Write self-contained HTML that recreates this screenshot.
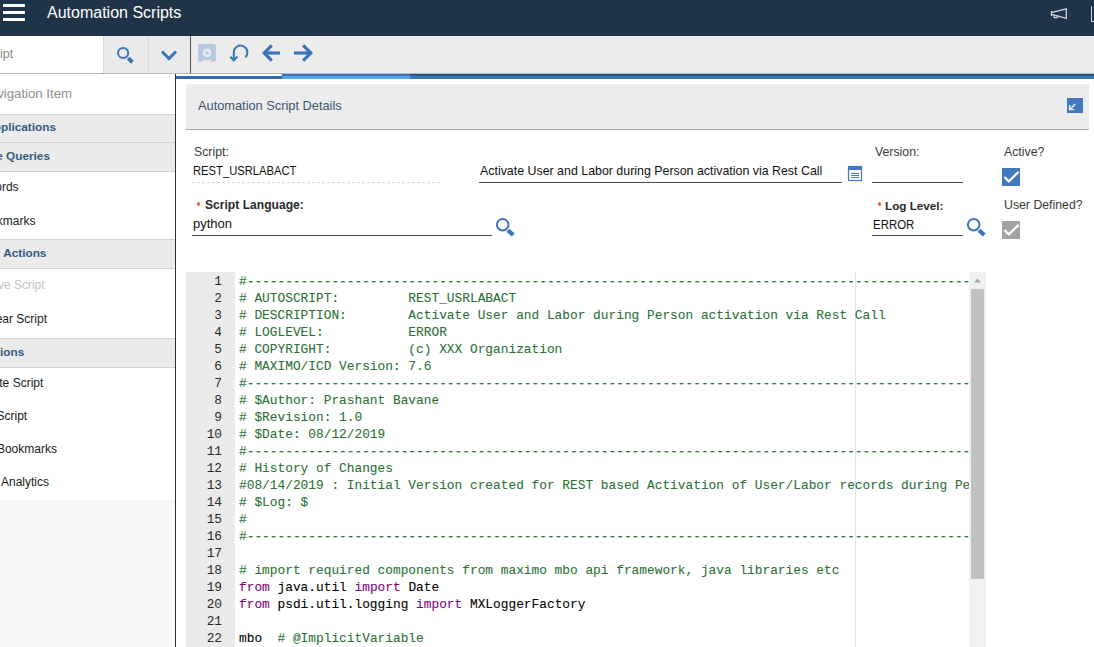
<!DOCTYPE html>
<html><head><meta charset="utf-8">
<style>
*{box-sizing:border-box;margin:0;padding:0}
html,body{width:1094px;height:647px;overflow:hidden;background:#fff;font-family:"Liberation Sans",sans-serif;position:relative}
.a{position:absolute}
.r{width:300px;text-align:right;white-space:nowrap}
#hdr{left:0;top:0;width:1094px;height:36px;background:#1f3448}
.ham{left:3px;width:22px;height:3px;background:#fff}
#title{left:47px;top:4px;font-size:16px;line-height:18px;color:#fff;white-space:nowrap}
#tb{left:0;top:36px;width:1094px;height:38px;background:#ececec;border-bottom:1px solid #b8b8b8}
.lp-band{left:0;width:175px;background:#ebebeb;border-top:1px solid #d2d2d2;border-bottom:1px solid #d2d2d2}
.lp-st{font-weight:bold;color:#345a82;font-size:11.8px;line-height:14px}
.lp-it{font-size:12px;line-height:14px;color:#1a1a1a}
.lp-ph{font-size:13.2px;line-height:15px;color:#8f8f8f}
.lbl{font-size:12.3px;line-height:14px;color:#3a3a3a;white-space:nowrap}
.val{font-size:12px;line-height:14px;color:#111;white-space:nowrap}
.req{font-size:12.1px;line-height:14px;color:#2a2a2a;font-weight:bold;white-space:nowrap}
.dot{width:3.8px;height:3.8px;border-radius:50%;background:#ee6a2a}
.code{font-family:"Liberation Mono",monospace;font-size:12.83px;line-height:17px;white-space:pre;color:#000;-webkit-text-stroke:0.08px currentColor}
.c{color:#2a7034}
.k{color:#80007c}
.ln{font-family:"Liberation Mono",monospace;font-size:12.8px;line-height:17px;color:#2a2a2a;text-align:right;width:36px}
.ul{height:1px;background:#4a4a4a}
</style></head><body>
<!-- header -->
<div id="hdr" class="a">
  <div class="a ham" style="top:4px"></div>
  <div class="a ham" style="top:11px"></div>
  <div class="a ham" style="top:18px"></div>
  <div id="title" class="a">Automation Scripts</div>
  <svg class="a" style="left:1049px;top:6px" width="20" height="16" viewBox="0 0 20 16">
    <path d="M2.5 5 V10" stroke="#d0d4da" stroke-width="1.4"/>
    <path d="M3 6.4 L17.3 2.8 V12.3 L3 8.4" fill="none" stroke="#d0d4da" stroke-width="1.3"/>
    <path d="M5.2 9 V11.6 H8.3 V10" fill="none" stroke="#d0d4da" stroke-width="1.2"/>
  </svg>
  <div class="a" style="left:1091px;top:6px;width:8px;height:16px;border-left:1px solid #d0d4da;border-bottom:1px solid #d0d4da"></div>
</div>

<!-- toolbar -->
<div id="tb" class="a">
  <div class="a" style="left:0;top:0;width:103px;height:37px;background:#fff"></div>
  <div class="a" style="left:0;top:11px;font-size:12.5px;color:#8a8a8a;line-height:14px">ipt</div>
  <div class="a" style="left:103px;top:0;width:46px;height:37px;background:#eaeaea;border-left:1px solid #d8d8d8;border-right:1px solid #d8d8d8"></div>
  <div class="a" style="left:149px;top:0;width:42px;height:37px;background:#eaeaea;border-right:1px solid #505050"></div>
  <svg class="a" style="left:115px;top:10px" width="20" height="20" viewBox="0 0 20 20">
    <circle cx="8.1" cy="7" r="5.1" fill="none" stroke="#3c74bb" stroke-width="2"/>
    <path d="M13.2 12.2 L17.4 16.4" stroke="#3c74bb" stroke-width="4"/>
  </svg>
  <svg class="a" style="left:159px;top:11.5px" width="20" height="16" viewBox="0 0 20 16">
    <path d="M3 3.5 L10 10.5 L17 3.5" fill="none" stroke="#3c74bb" stroke-width="3.1"/>
  </svg>
  <svg class="a" style="left:197px;top:7px" width="20" height="20" viewBox="0 0 20 20">
    <path d="M1.1 0.9 H17.2 L18.9 2.6 V17.3 L17.4 18.8 H14.2 V17.1 H5.8 V18.8 H1.1 Z" fill="#b7c9e0"/>
    <circle cx="10" cy="9.9" r="3" fill="none" stroke="#e6ecf3" stroke-width="2.6"/>
  </svg>
  <svg class="a" style="left:228px;top:7px" width="22" height="20" viewBox="0 0 22 20">
    <path d="M17.3 14.3 A6.8 6.8 0 1 0 5.8 9.5 V17" fill="none" stroke="#3c74bb" stroke-width="2"/>
    <path d="M2.3 13.8 L5.8 17.5 L9.3 13.8" fill="none" stroke="#3c74bb" stroke-width="2"/>
  </svg>
  <svg class="a" style="left:261px;top:7px" width="21" height="20" viewBox="0 0 21 20">
    <path d="M19 10 H4" stroke="#3c74bb" stroke-width="3.2"/>
    <path d="M10.8 2.3 L3.2 10 L10.8 17.7" fill="none" stroke="#3c74bb" stroke-width="3.2"/>
  </svg>
  <svg class="a" style="left:293px;top:7px" width="21" height="20" viewBox="0 0 21 20">
    <path d="M1 10 H16" stroke="#3c74bb" stroke-width="3.2"/>
    <path d="M10.2 2.3 L17.8 10 L10.2 17.7" fill="none" stroke="#3c74bb" stroke-width="3.2"/>
  </svg>
</div>

<!-- left panel -->
<div class="a" style="left:0;top:74px;width:175px;height:573px;background:#fff"></div>
<div class="a" style="left:0;top:500px;width:175px;height:147px;background:#f7f7f7"></div>
<div class="a" style="left:175px;top:74px;width:1px;height:573px;background:#1f3448"></div>
<div class="a lp-band" style="top:114px;height:29px"></div>
<div class="a lp-band" style="top:142px;height:30px"></div>
<div class="a lp-band" style="top:239px;height:30px"></div>
<div class="a lp-band" style="top:338px;height:30px"></div>
<div class="a lp-ph r" style="left:-228px;top:86px;">vigation Item</div><div class="a lp-st r" style="left:-244px;top:120px;">Go To Applications</div><div class="a lp-st r" style="left:-250px;top:149px;">Available Queries</div><div class="a lp-it r" style="left:-281.4px;top:180px;">All Records</div><div class="a lp-it r" style="left:-264.6px;top:213.5px;">All Bookmarks</div><div class="a lp-st r" style="left:-253.6px;top:246px;">Common Actions</div><div class="a lp-it r" style="left:-255.4px;top:278px;color:#c4c4c4">Save Script</div><div class="a lp-it r" style="left:-253px;top:312px;">Clear Script</div><div class="a lp-st r" style="left:-275.7px;top:345px;">More Actions</div><div class="a lp-it r" style="left:-256.7px;top:376px;">Duplicate Script</div><div class="a lp-it r" style="left:-272.8px;top:409px;">Create Script</div><div class="a lp-it r" style="left:-243.1px;top:442px;">Add to Bookmarks</div><div class="a lp-it r" style="left:-251px;top:475px;">Run Analytics</div>

<!-- tab bar -->
<div class="a" style="left:176px;top:74px;width:106px;height:2px;background:#fff"></div>
<div class="a" style="left:176px;top:76px;width:106px;height:3px;background:#3169b1"></div>
<div class="a" style="left:282px;top:74px;width:128px;height:2px;background:#3a72ba"></div>
<div class="a" style="left:282px;top:76px;width:128px;height:3px;background:#55a7f5"></div>
<div class="a" style="left:410px;top:74px;width:684px;height:2px;background:#2b5a7e"></div>
<div class="a" style="left:410px;top:76px;width:684px;height:3px;background:#3b77be"></div>

<!-- section header -->
<div class="a" style="left:186px;top:84px;width:903px;height:46px;background:#ececec;border-bottom:1px solid #a9a9a9"></div>
<div class="a" style="left:198px;top:98px;font-size:12.8px;line-height:15px;color:#3e5670;white-space:nowrap">Automation Script Details</div>
<div class="a" style="left:1067px;top:98px;width:16px;height:15px;background:#4178be"></div>
<svg class="a" style="left:1067px;top:98px" width="16" height="15" viewBox="0 0 16 15">
  <path d="M8.2 6 L3 11.2" stroke="#eef2f8" stroke-width="1.5"/>
  <path d="M2.6 6.9 V11.5 H7.2" fill="none" stroke="#eef2f8" stroke-width="1.5"/>
</svg>

<!-- form row 1 -->
<div class="a lbl" style="left:194px;top:145px">Script:</div>
<div class="a val" style="left:193px;top:164px;font-size:12.6px;transform:scaleX(.89);transform-origin:0 0">REST_USRLABACT</div>
<div class="a" style="left:192px;top:182px;width:250px;height:1px;background:repeating-linear-gradient(90deg,#dadada 0 3px,transparent 3px 5px)"></div>

<div class="a val" style="left:480px;top:164px;font-size:12.4px">Activate User and Labor during Person activation via Rest Call</div>
<div class="a ul" style="left:479px;top:182px;width:363px"></div>
<svg class="a" style="left:847px;top:165px" width="16" height="17" viewBox="0 0 16 17">
  <rect x="1.5" y="1.5" width="13" height="14" fill="#fff" stroke="#4178be" stroke-width="1.2"/>
  <rect x="1" y="1" width="14" height="4" fill="#4178be"/>
  <path d="M4.2 8.5 H12 M4.2 10.5 H12 M4.2 12.5 H12" stroke="#4178be" stroke-width="1"/>
</svg>

<div class="a lbl" style="left:875px;top:145px">Version:</div>
<div class="a ul" style="left:872px;top:182px;width:91px"></div>

<div class="a lbl" style="left:1004px;top:145px">Active?</div>
<div class="a" style="left:1002px;top:168px;width:18px;height:18px;background:#4178be"></div>
<svg class="a" style="left:1002px;top:168px" width="18" height="18" viewBox="0 0 18 18">
  <path d="M2.4 9 L6.8 13.4 L16.6 3.9" fill="none" stroke="#fff" stroke-width="2.2"/>
</svg>

<!-- form row 2 -->
<div class="a dot" style="left:196.6px;top:202px"></div>
<div class="a req" style="left:205px;top:198px">Script Language:</div>
<div class="a val" style="left:193px;top:217px;font-size:13px">python</div>
<div class="a ul" style="left:192px;top:235px;width:300px"></div>
<svg class="a" style="left:495px;top:217px" width="20" height="20" viewBox="0 0 20 20">
  <circle cx="7.7" cy="7.7" r="5.8" fill="none" stroke="#3c74bb" stroke-width="2"/>
  <path d="M13 13.2 L18.2 18" stroke="#3c74bb" stroke-width="4.2"/>
</svg>

<div class="a dot" style="left:877.6px;top:202px"></div>
<div class="a req" style="left:885px;top:198.5px;font-size:11.7px">Log Level:</div>
<div class="a val" style="left:873px;top:217.5px;font-size:12.3px;transform:scaleX(.93);transform-origin:0 0">ERROR</div>
<div class="a ul" style="left:872px;top:235px;width:91px"></div>
<svg class="a" style="left:966px;top:217px" width="20" height="20" viewBox="0 0 20 20">
  <circle cx="7.7" cy="7.7" r="5.8" fill="none" stroke="#3c74bb" stroke-width="2"/>
  <path d="M13 13.2 L18.2 18" stroke="#3c74bb" stroke-width="4.2"/>
</svg>

<div class="a lbl" style="left:1004px;top:198px">User Defined?</div>
<div class="a" style="left:1002px;top:221px;width:18px;height:18px;background:#a2a2a2"></div>
<svg class="a" style="left:1002px;top:221px" width="18" height="18" viewBox="0 0 18 18">
  <path d="M2.4 9 L6.8 13.4 L16.6 3.9" fill="none" stroke="#fff" stroke-width="2.2"/>
</svg>

<!-- code editor -->
<div class="a" style="left:186px;top:272px;width:49px;height:375px;background:#ebebeb"></div>
<div class="a" style="left:855px;top:272px;width:1px;height:375px;background:#e6e6e6"></div>
<div class="a ln" style="left:186px;top:273px">1<br>2<br>3<br>4<br>5<br>6<br>7<br>8<br>9<br>10<br>11<br>12<br>13<br>14<br>15<br>16<br>17<br>18<br>19<br>20<br>21<br>22</div>
<div class="a" style="left:235px;top:272px;width:734px;height:375px;overflow:hidden">
<div class="a code" style="left:4px;top:1px"><span class="c">#------------------------------------------------------------------------------------------------------------------------</span>
<span class="c"># AUTOSCRIPT:         REST_USRLABACT</span>
<span class="c"># DESCRIPTION:        Activate User and Labor during Person activation via Rest Call</span>
<span class="c"># LOGLEVEL:           ERROR</span>
<span class="c"># COPYRIGHT:          (c) XXX Organization</span>
<span class="c"># MAXIMO/ICD Version: 7.6</span>
<span class="c">#------------------------------------------------------------------------------------------------------------------------</span>
<span class="c"># $Author: Prashant Bavane</span>
<span class="c"># $Revision: 1.0</span>
<span class="c"># $Date: 08/12/2019</span>
<span class="c">#------------------------------------------------------------------------------------------------------------------------</span>
<span class="c"># History of Changes</span>
<span class="c">#08/14/2019 : Initial Version created for REST based Activation of User/Labor records during Person activation</span>
<span class="c"># $Log: $</span>
<span class="c">#</span>
<span class="c">#------------------------------------------------------------------------------------------------------------------------</span>

<span class="c"># import required components from maximo mbo api framework, java libraries etc</span>
<span class="k">from</span> java.util <span class="k">import</span> Date
<span class="k">from</span> psdi.util.logging <span class="k">import</span> MXLoggerFactory

mbo  <span class="c"># @ImplicitVariable</span></div>
</div>
<div class="a" style="left:969px;top:272px;width:17px;height:375px;background:#f1f1f1"></div>
<svg class="a" style="left:969px;top:272px" width="17" height="17" viewBox="0 0 17 17">
  <path d="M5 10.5 L8.5 6.5 L12 10.5 Z" fill="#a3a3a3"/>
</svg>
<div class="a" style="left:971px;top:289px;width:13px;height:290px;background:#c1c1c1"></div>
</body></html>
